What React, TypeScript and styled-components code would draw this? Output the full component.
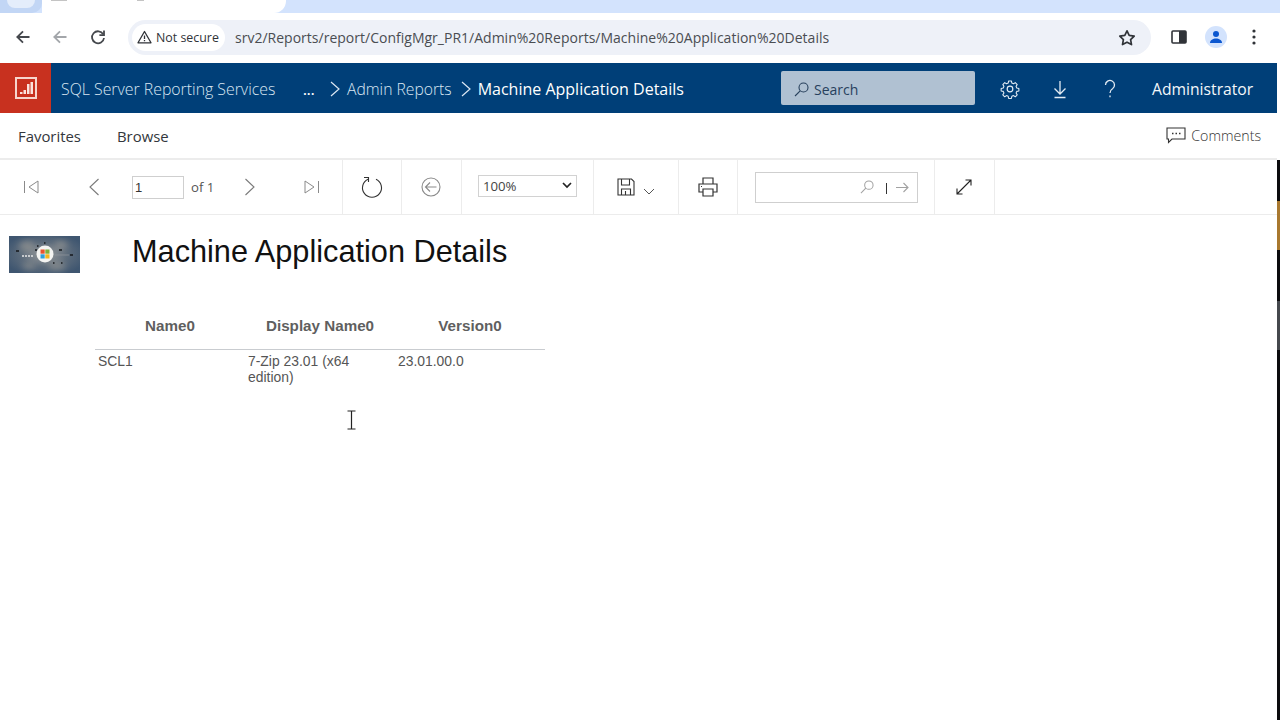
import styled, { createGlobalStyle } from "styled-components";

const GlobalStyle = createGlobalStyle`
  html, body {
    margin: 0;
    padding: 0;
    background: #fff;
    overflow: hidden;
  }
  body {
    font-family: "Open Sans", "Liberation Sans", sans-serif;
  }
`;

const Page = styled.div`
  position: relative;
  width: 1280px;
  height: 720px;
  overflow: hidden;
  display: flex;
  flex-direction: column;
`;

const EdgeStrip = styled.div`
  position: absolute;
  top: 62px;
  right: 0;
  bottom: 0;
  width: 3px;
  background: linear-gradient(
    to bottom,
    #fff 0,
    #fff 98px,
    #0c0c0e 98px,
    #0c0c0e 139px,
    #a8782f 139px,
    #a8782f 188px,
    #0c0c0e 188px,
    #0c0c0e 239px,
    #45484d 239px,
    #45484d 288px,
    #0c0c0e 288px
  );
`;

/* browser chrome */
const TabStrip = styled.div`
  height: 13px;
  background: #d3e3fd;
  display: flex;
  flex: none;
`;

const TabCorner = styled.div`
  width: 42px;
  height: 13px;
  background: #c2d6f5;
  border-bottom-right-radius: 10px;
  display: flex;
  justify-content: center;
`;

const TabCornerInner = styled.div`
  width: 28px;
  height: 8px;
  background: #e4edfb;
  border-radius: 0 0 8px 8px;
`;

const ActiveTab = styled.div`
  width: 244px;
  height: 13px;
  background: #fff;
  border-bottom-right-radius: 12px;
  display: flex;
  align-items: flex-start;
  padding-left: 9px;
  box-sizing: border-box;
  gap: 70px;
`;

const TabTitleStub = styled.div<{ $w: number }>`
  width: ${(p) => p.$w}px;
  height: 1px;
  background: #c4c4c4;
`;

const BrowserBar = styled.div`
  height: 50px;
  flex: none;
  box-sizing: border-box;
  padding-bottom: 2px;
  background: #fff;
  display: flex;
  align-items: center;
`;

const BrowserIcon = styled.div<{ $w: number }>`
  width: ${(p) => p.$w}px;
  flex: none;
  display: flex;
  justify-content: center;
  align-items: center;
`;

const AddressBar = styled.div`
  width: 1023px;
  height: 35px;
  margin-left: 7px;
  box-sizing: border-box;
  border-radius: 18px;
  background: #eef1f8;
  display: flex;
  align-items: center;
  padding: 0 15px 0 4px;
`;

const SecurityChip = styled.div`
  height: 27px;
  width: 93px;
  flex: none;
  border-radius: 14px;
  background: #fff;
  display: flex;
  align-items: center;
  gap: 4px;
  padding-left: 5px;
  box-sizing: border-box;
  font-size: 12.4px;
  font-weight: 500;
  color: #303338;
`;

const UrlText = styled.div`
  margin-left: 10px;
  flex: 1;
  font-size: 14px;
  letter-spacing: 0.01px;
  color: #4a4d52;
  white-space: nowrap;
`;

const BrowserActions = styled.div`
  display: flex;
  align-items: center;
  margin-left: 9px;
`;

const Avatar = styled.div`
  width: 22px;
  height: 22px;
  border-radius: 50%;
  background: #d3e3fd;
  display: flex;
  align-items: center;
  justify-content: center;
`;

/* report server header */
const NavBar = styled.header`
  height: 50px;
  flex: none;
  background: #003f78;
  display: flex;
  align-items: center;
  color: #fff;
`;

const BrandTile = styled.div`
  width: 51px;
  height: 50px;
  flex: none;
  background: #c8311f;
  display: flex;
  align-items: center;
  justify-content: center;
`;

const BrandName = styled.div`
  margin: 2px 0 0 10px;
  width: 242px;
  font-size: 15.85px;
  font-weight: 300;
  color: #d9e6f2;
  white-space: nowrap;
`;

const Crumbs = styled.nav`
  display: flex;
  align-items: center;
  width: 478px;
  margin-top: 2px;
  font-size: 16px;
  white-space: nowrap;
`;

const Ellipsis = styled.span`
  width: 25px;
  font-weight: 600;
  font-size: 14px;
`;

const Crumb = styled.span<{ $current?: boolean }>`
  font-weight: ${(p) => (p.$current ? 400 : 300)};
  font-size: ${(p) => (p.$current ? 16 : 15.7)}px;
  color: ${(p) => (p.$current ? "#fff" : "#dbe7f3")};
  margin-left: 5px;
  margin-right: ${(p) => (p.$current ? 5 : 7)}px;
`;

const SearchBox = styled.div`
  width: 194px;
  height: 34px;
  border-radius: 2px;
  background: #b0c1d2;
  display: flex;
  align-items: center;
  gap: 5px;
  padding: 2px 0 0 13px;
  box-sizing: border-box;
  font-size: 14px;
  color: #27405c;
`;

const NavIcons = styled.div`
  display: flex;
  align-items: center;
  margin: 1px 0 0 25px;
  gap: 30px;
`;

const UserName = styled.div`
  margin: 2px 0 0 32px;
  font-size: 15.7px;
  color: #f4f7fa;
`;

/* favorites row */
const TabsRow = styled.div`
  height: 45px;
  flex: none;
  display: flex;
  align-items: center;
  padding-left: 18px;
  gap: 36px;
  font-size: 14.9px;
  color: #33373c;
  border-bottom: 2px solid #ececec;
`;

const TabLabel = styled.span`
  margin-top: 1px;
`;

const CommentsLink = styled.div`
  margin-left: auto;
  margin-right: 19px;
  display: flex;
  align-items: center;
  gap: 5px;
  font-size: 14.2px;
  font-weight: 300;
  color: #333;
`;

/* report viewer toolbar */
const Toolbar = styled.div`
  height: 55px;
  flex: none;
  display: flex;
  border-bottom: 1px solid #ececec;
  box-sizing: border-box;
`;

const ToolGroup = styled.div<{ $w: number; $start?: boolean }>`
  width: ${(p) => p.$w}px;
  box-sizing: border-box;
  flex: none;
  display: flex;
  align-items: center;
  justify-content: ${(p) => (p.$start ? "flex-start" : "center")};
  border-right: 1px solid #ececec;
`;

const PagerIcon = styled.div<{ $w: number; $ml?: number }>`
  width: ${(p) => p.$w}px;
  margin-left: ${(p) => p.$ml ?? 0}px;
  flex: none;
  display: flex;
  justify-content: center;
  align-items: center;
`;

const ToolIcon = styled.svg<{ $ml?: number; $mr?: number; $mt?: number }>`
  flex: none;
  margin-left: ${(p) => p.$ml ?? 0}px;
  margin-right: ${(p) => p.$mr ?? 0}px;
  margin-top: ${(p) => p.$mt ?? 0}px;
`;

const PageInput = styled.div`
  width: 52px;
  height: 23px;
  margin-left: 6px;
  box-sizing: border-box;
  flex: none;
  border: 1px solid #cfcfcf;
  font-family: "Liberation Sans", sans-serif;
  font-size: 13px;
  line-height: 21px;
  padding-left: 2px;
  color: #333;
`;

const PageTotal = styled.span`
  width: 52px;
  flex: none;
  padding-left: 7px;
  box-sizing: border-box;
  font-size: 13.2px;
  color: #555;
`;

const ZoomSelect = styled.div`
  width: 99px;
  height: 22px;
  margin-bottom: 3px;
  box-sizing: border-box;
  border: 1px solid #d2d2d2;
  display: flex;
  align-items: center;
  justify-content: space-between;
  padding: 0 4px;
  font-size: 13.2px;
  color: #444;
`;

const FindBox = styled.div`
  width: 163px;
  height: 31px;
  box-sizing: border-box;
  border: 1px solid #cfcfcf;
  display: flex;
  align-items: center;
  justify-content: flex-end;
  padding-right: 8px;
  gap: 9px;
`;

const FindDivider = styled.div`
  width: 1px;
  height: 11px;
  margin-top: 3px;
  background: #333;
`;

/* report body */
const ReportBody = styled.main`
  flex: 1;
  padding: 21px 0 0 9px;
  font-family: "Liberation Sans", Arial, sans-serif;
`;

const ReportHead = styled.div`
  display: flex;
  align-items: flex-start;
`;

const LogoImage = styled.svg`
  display: block;
  flex: none;
`;

const ReportTitle = styled.h1`
  margin: -2px 0 0 52px;
  font-size: 30.7px;
  line-height: 36px;
  font-weight: 400;
  color: #111;
`;

const ReportTable = styled.div`
  margin: 38px 0 0 86px;
  width: 450px;
`;

const TableHeader = styled.div`
  display: grid;
  grid-template-columns: 150px 150px 150px;
  height: 39px;
  border-bottom: 1px solid #c9ccd0;
  font-size: 15.2px;
  font-weight: 700;
  color: #5f5f5f;
  line-height: 16px;
  box-sizing: border-box;
  padding-top: 7px;
`;

const HeadCell = styled.div`
  text-align: center;
`;

const TableRow = styled.div`
  display: grid;
  grid-template-columns: 150px 150px 150px;
  padding-top: 2.5px;
  font-size: 13.9px;
  line-height: 16.5px;
  color: #555;
`;

const Cell = styled.div`
  padding: 0 3px;
  width: 125px;
`;

const TextCursor = styled.svg`
  position: absolute;
  left: 346px;
  top: 410px;
`;

function BackArrow({ color = "#45484d" }: { color?: string }) {
  return (
    <svg width="16" height="16" viewBox="0 0 16 16" fill="none" stroke={color} strokeWidth="1.8">
      <path d="M14.5 8H2.5M8 2.3 2.3 8 8 13.7" />
    </svg>
  );
}

function ReportLogo() {
  return (
    <LogoImage width="71" height="37" viewBox="0 0 71 37">
      <defs>
        <radialGradient id="glow" cx="50%" cy="50%" r="60%">
          <stop offset="0" stopColor="#9a9c9c" />
          <stop offset="0.55" stopColor="#5c6b7b" />
          <stop offset="1" stopColor="#3f5670" />
        </radialGradient>
        <filter id="soft">
          <feGaussianBlur stdDeviation="3" />
        </filter>
      </defs>
      <rect width="71" height="37" fill="url(#glow)" />
      <g filter="url(#soft)" fill="#a8a49c" opacity="0.55">
        <ellipse cx="18" cy="10" rx="8" ry="5" />
        <ellipse cx="52" cy="9" rx="7" ry="4" />
        <ellipse cx="48" cy="30" rx="9" ry="4" />
        <ellipse cx="20" cy="30" rx="7" ry="3" />
      </g>
      <circle cx="36" cy="18" r="8.500" fill="#f4f4f2" />
      <rect x="31.500" y="13.500" width="4.200" height="4.200" fill="#e8542f" />
      <rect x="36.300" y="13.500" width="4.200" height="4.200" fill="#7fb03a" />
      <rect x="31.500" y="18.300" width="4.200" height="4.200" fill="#2f9fdc" />
      <rect x="36.300" y="18.300" width="4.200" height="4.200" fill="#f3b61f" />
      <path
        d="M7 15h3M26 14h2M35 7h1.500M50 14h3M61 19h3M44 27h1.500M52 27h1.500M28 10h1.500"
        stroke="#16181c"
        strokeWidth="1.300"
      />
      <path d="M46 19h14" stroke="#8d9299" strokeWidth="0.800" />
      <path d="M13 20h12" stroke="#e6e6e6" strokeWidth="1.600" strokeDasharray="2 1" />
    </LogoImage>
  );
}

export default function App() {
  return (
    <Page>
      <GlobalStyle />
      <TabStrip>
        <TabCorner>
          <TabCornerInner />
        </TabCorner>
        <ActiveTab>
          <TabTitleStub $w={16} />
          <TabTitleStub $w={7} />
        </ActiveTab>
      </TabStrip>

      <BrowserBar>
        <BrowserIcon $w={46}>
          <BackArrow />
        </BrowserIcon>
        <BrowserIcon $w={28}>
          <BackArrow color="#a3a6aa" />
        </BrowserIcon>
        <BrowserIcon $w={47}>
          <svg width="16" height="16" viewBox="0 0 16 16" fill="none" stroke="#45484d" strokeWidth="1.800">
            <path d="M13.200 5.200A6 6 0 1 0 14 9" />
            <path d="M14 1.500v4.600H9.400" />
          </svg>
        </BrowserIcon>
        <AddressBar>
          <SecurityChip>
            <svg width="15" height="14" viewBox="0 0 15 14" fill="none" stroke="#303338" strokeWidth="1.300">
              <path d="M7.500 1.500 14 12.800H1z" strokeLinejoin="round" />
              <path d="M7.500 5.500v3.600M7.500 10v1.200" />
            </svg>
            Not secure
          </SecurityChip>
          <UrlText>srv2/Reports/report/ConfigMgr_PR1/Admin%20Reports/Machine%20Application%20Details</UrlText>
          <svg width="18" height="17" viewBox="0 0 18 17" fill="none" stroke="#303338" strokeWidth="1.700">
            <path d="m9 1.800 2.200 4.600 5 .7-3.600 3.500.9 5L9 13.200l-4.500 2.400.9-5L1.800 7.100l5-.7z" strokeLinejoin="round" />
          </svg>
        </AddressBar>
        <BrowserActions>
          <BrowserIcon $w={38}>
            <svg width="16" height="14" viewBox="0 0 16 14">
              <rect x="1" y="1" width="14" height="12" rx="1" fill="none" stroke="#303338" strokeWidth="1.600" />
              <rect x="8" y="1" width="7" height="12" fill="#303338" />
            </svg>
          </BrowserIcon>
          <BrowserIcon $w={36}>
            <Avatar>
              <svg width="14" height="14" viewBox="0 0 14 14" fill="#0b57d0">
                <circle cx="7" cy="4" r="3" />
                <path d="M1 13c0-3 3-4.500 6-4.500s6 1.500 6 4.500z" />
              </svg>
            </Avatar>
          </BrowserIcon>
          <BrowserIcon $w={40}>
            <svg width="4" height="16" viewBox="0 0 4 16" fill="#303338">
              <circle cx="2" cy="2" r="1.600" />
              <circle cx="2" cy="8" r="1.600" />
              <circle cx="2" cy="14" r="1.600" />
            </svg>
          </BrowserIcon>
        </BrowserActions>
      </BrowserBar>

      <NavBar>
        <BrandTile>
          <svg width="22" height="22" viewBox="0 0 22 22">
            <rect x="1" y="1" width="20" height="20" fill="none" stroke="#f7d5cd" strokeWidth="2" />
            <path d="M5 17v-2h2.500v2zM8.500 17v-4H11v4zM12 17V7h2.500v10zM15.500 17V5H18v12z" fill="#fbe3dd" />
          </svg>
        </BrandTile>
        <BrandName>SQL Server Reporting Services</BrandName>
        <Crumbs>
          <Ellipsis>...</Ellipsis>
          <svg width="14" height="18" viewBox="0 0 14 18" fill="none" stroke="#dbe7f3" strokeWidth="1.200">
            <path d="m3 2 8 7-8 7" />
          </svg>
          <Crumb>Admin Reports</Crumb>
          <svg width="14" height="18" viewBox="0 0 14 18" fill="none" stroke="#dbe7f3" strokeWidth="1.200">
            <path d="m3 2 8 7-8 7" />
          </svg>
          <Crumb $current>Machine Application Details</Crumb>
        </Crumbs>
        <SearchBox>
          <svg width="15" height="15" viewBox="0 0 15 15" fill="none" stroke="#27405c" strokeWidth="1.100">
            <circle cx="9.500" cy="5.500" r="4.500" />
            <path d="M6.200 8.800 1 14" />
          </svg>
          Search
        </SearchBox>
        <NavIcons>
          <svg width="20" height="20" viewBox="0 0 24 24" fill="none" stroke="#e3ecf4" strokeWidth="1.400">
            <circle cx="12" cy="12" r="3.400" />
            <path
              d="M10.200 2.500h3.600l.6 2.800 2.200.9 2.400-1.500 2.500 2.500-1.500 2.400.9 2.200 2.800.6v3.200l-2.800.6-.9 2.200 1.500 2.400-2.500 2.500-2.400-1.500-2.200.9-.6 2.800h-3.600l-.6-2.800-2.200-.9-2.400 1.500-2.500-2.500 1.500-2.400-.9-2.200-2.800-.6v-3.200l2.800-.6.9-2.200-1.500-2.400 2.500-2.500 2.400 1.500 2.200-.9z"
              transform="translate(1.100 .1) scale(0.91)"
              strokeLinejoin="round"
            />
          </svg>
          <svg width="20" height="20" viewBox="0 0 20 20" fill="none" stroke="#e3ecf4" strokeWidth="1.300">
            <path d="M10 2v13M4.500 9.500 10 15l5.500-5.500M4.500 18.500h11" />
          </svg>
          <svg width="20" height="20" viewBox="0 0 20 20" fill="none" stroke="#e3ecf4" strokeWidth="1.300">
            <path d="M5.500 6a4.500 4.500 0 1 1 7 3.700c-1.600 1-2.500 2-2.500 4.300" />
            <path d="M10 16.500v1.800" />
          </svg>
        </NavIcons>
        <UserName>Administrator</UserName>
      </NavBar>

      <TabsRow>
        <TabLabel>Favorites</TabLabel>
        <TabLabel>Browse</TabLabel>
        <CommentsLink>
          <svg width="20" height="17" viewBox="0 0 20 17" fill="none" stroke="#333" strokeWidth="1.100">
            <path d="M1 1h18v11H6l-3.500 3.500V12H1z" />
            <path d="M6 6.500h1.500M9.500 6.500H11M13 6.500h1.500" strokeWidth="1.400" />
          </svg>
          Comments
        </CommentsLink>
      </TabsRow>

      <Toolbar>
        <ToolGroup $w={343} $start>
          <PagerIcon $w={62}>
            <svg width="16" height="14" viewBox="0 0 16 14" fill="none" stroke="#8a8a8a">
              <path d="M1.500 1v12M15 1 6 7l9 6z" />
            </svg>
          </PagerIcon>
          <PagerIcon $w={64}>
            <svg width="12" height="18" viewBox="0 0 12 18" fill="none" stroke="#7a7a7a" strokeWidth="1.100">
              <path d="M10.500 1 2 9l8.500 8" />
            </svg>
          </PagerIcon>
          <PageInput>1</PageInput>
          <PageTotal>of 1</PageTotal>
          <PagerIcon $w={28}>
            <svg width="12" height="18" viewBox="0 0 12 18" fill="none" stroke="#7a7a7a" strokeWidth="1.100">
              <path d="M1.500 1 10 9l-8.500 8" />
            </svg>
          </PagerIcon>
          <PagerIcon $w={30} $ml={33}>
            <svg width="16" height="14" viewBox="0 0 16 14" fill="none" stroke="#8a8a8a">
              <path d="M14.500 1v12M1 1l9 6-9 6z" />
            </svg>
          </PagerIcon>
        </ToolGroup>
        <ToolGroup $w={59}>
          <svg width="22" height="22" viewBox="0 0 22 22" fill="none" stroke="#333" strokeWidth="1.100">
            <path d="M7 3.200A9.500 9.500 0 1 0 15 3.200" />
            <path d="M3 1.500h4.500V6" />
          </svg>
        </ToolGroup>
        <ToolGroup $w={60}>
          <ToolIcon $mr={2} width="20" height="20" viewBox="0 0 20 20" fill="none" stroke="#8a8a8a" strokeWidth="1.100">
            <circle cx="10" cy="10" r="9" />
            <path d="M15.500 10h-11M9 5.500 4.500 10 9 14.500" />
          </ToolIcon>
        </ToolGroup>
        <ToolGroup $w={132}>
          <ZoomSelect>
            100%
            <svg width="10" height="7" viewBox="0 0 10 7" fill="none" stroke="#222" strokeWidth="1.700">
              <path d="m1 1 4 4 4-4" />
            </svg>
          </ZoomSelect>
        </ToolGroup>
        <ToolGroup $w={85}>
          <svg width="18" height="18" viewBox="0 0 18 18" fill="none" stroke="#333" strokeWidth="1.100">
            <path d="M1 1h13.500L17 3.500V17H1zM4.500 1v6h8V1M4.500 17v-6h9v6M8.500 13v4" />
          </svg>
          <ToolIcon $ml={8} $mt={9} width="12" height="7" viewBox="0 0 12 7" fill="none" stroke="#555">
            <path d="m1 1 5 5 5-5" />
          </ToolIcon>
        </ToolGroup>
        <ToolGroup $w={59}>
          <svg width="20" height="20" viewBox="0 0 20 20" fill="none" stroke="#333" strokeWidth="1.200">
            <path d="M5 7V1h10v6M5 15H1V7h18v8h-4M5 12h10v7H5z" />
            <path d="M3 9.500h1" />
          </svg>
        </ToolGroup>
        <ToolGroup $w={197}>
          <FindBox>
            <ToolIcon $mr={3} width="14" height="14" viewBox="0 0 15 15" fill="none" stroke="#a2a2a2" strokeWidth="1.100">
              <circle cx="9.500" cy="5.500" r="4.500" />
              <path d="M6.200 8.800 1 14" />
            </ToolIcon>
            <FindDivider />
            <svg width="13" height="11" viewBox="0 0 13 11" fill="none" stroke="#a2a2a2" strokeWidth="1.100">
              <path d="M0 5.500h12M7.500 1 12 5.500 7.500 10" />
            </svg>
          </FindBox>
        </ToolGroup>
        <ToolGroup $w={60}>
          <ToolIcon $mr={2} width="16" height="16" viewBox="0 0 16 16" fill="none" stroke="#222" strokeWidth="1.100">
            <path d="M1 15 15 1M9.500 1H15v5.500M1 9.500V15h5.500" />
          </ToolIcon>
        </ToolGroup>
      </Toolbar>

      <ReportBody>
        <ReportHead>
          <ReportLogo />
          <ReportTitle>Machine Application Details</ReportTitle>
        </ReportHead>
        <ReportTable>
          <TableHeader>
            <HeadCell>Name0</HeadCell>
            <HeadCell>Display Name0</HeadCell>
            <HeadCell>Version0</HeadCell>
          </TableHeader>
          <TableRow>
            <Cell>SCL1</Cell>
            <Cell>7-Zip 23.01 (x64 edition)</Cell>
            <Cell>23.01.00.0</Cell>
          </TableRow>
        </ReportTable>
      </ReportBody>

      <TextCursor width="11" height="20" viewBox="0 0 11 20" fill="none" stroke="#222" strokeWidth="1.200">
        <path d="M1.500 1h8M5.500 1v18M1.500 19h8" />
      </TextCursor>
      <EdgeStrip />
    </Page>
  );
}
